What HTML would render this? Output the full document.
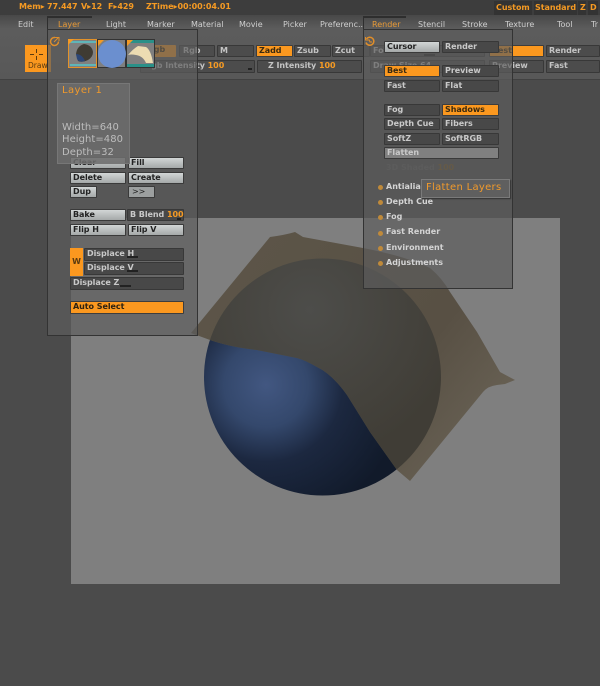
<!DOCTYPE html>
<html><head><meta charset="utf-8">
<style>
html,body{margin:0;padding:0;background:#4b4b4b}
#p{position:relative;width:600px;height:686px;overflow:hidden;background:#4b4b4b;font-family:"DejaVu Sans","Liberation Sans",sans-serif;filter:blur(.35px)}
#p div{position:absolute;box-sizing:border-box;white-space:nowrap}
.t{font-size:8px;color:#cfcfcf;top:20px;line-height:10px;font-weight:normal}
.b{font-size:8px;font-weight:bold;line-height:10px;height:12px;padding-left:2px;letter-spacing:-.05px;border-radius:1px}
.l{background:linear-gradient(#d2d6d6,#a5a9a9);color:#222;border:1px solid #3a3a3a}
.d{background:#484848;color:#c9c9c9;border:1px solid #383838}
.o{background:#fb981f;color:#3a2a10;border:1px solid #3d3d3d}
.tb{background:#4c4c4c;color:#c4c4c4;border:1px solid #383838}
.dot{width:5px;height:5px;border-radius:50%;background:#c08a3a}
.it{font-size:8px;font-weight:bold;color:#d4d4d4;letter-spacing:0;line-height:10px}
.top{font-size:8px;font-weight:bold;color:#f59a23;line-height:10px;letter-spacing:-.05px}
.mk{background:#f59a23;border:1px solid #222;box-sizing:content-box;height:2px}
</style></head><body>
<div id="p">
<!-- top chrome -->
<div style="left:0;top:0;width:600px;height:15px;background:#3d3d3d"></div>
<div style="left:0;top:15px;width:600px;height:27px;background:linear-gradient(#484848,#5c5c5c 50%,#5b5b5b)"></div>
<div style="left:0;top:42px;width:600px;height:38px;background:linear-gradient(#5b5b5b,#585858)"></div>
<div style="left:0;top:79px;width:600px;height:1px;background:#414141"></div>
<div class="top" style="left:19px;top:2px">Mem&#9656;</div>
<div class="top" style="left:47px;top:2px">77.447</div>
<div class="top" style="left:81px;top:2px">V&#9656;12</div>
<div class="top" style="left:108px;top:2px">F&#9656;429</div>
<div class="top" style="left:146px;top:2px">ZTime&#9656;00:00:04.01</div>
<div style="left:494px;top:1px;width:38px;height:14px;background:#333"></div>
<div style="left:534px;top:1px;width:43px;height:14px;background:#333"></div>
<div style="left:578px;top:1px;width:8px;height:14px;background:#333"></div>
<div style="left:588px;top:1px;width:10px;height:14px;background:#333"></div>
<div class="top" style="left:496px;top:3px">Custom</div>
<div class="top" style="left:535px;top:3px">Standard</div>
<div class="top" style="left:580px;top:3px">Z</div>
<div class="top" style="left:590px;top:3px">D</div>
<!-- tabs -->
<div class="t" style="left:18px">Edit</div>
<div class="t" style="left:58px;color:#e89a36">Layer</div>
<div class="t" style="left:106px">Light</div>
<div class="t" style="left:147px">Marker</div>
<div class="t" style="left:191px">Material</div>
<div class="t" style="left:239px">Movie</div>
<div class="t" style="left:283px">Picker</div>
<div class="t" style="left:320px">Preferenc..</div>
<div class="t" style="left:372px;color:#e89a36">Render</div>
<div class="t" style="left:418px">Stencil</div>
<div class="t" style="left:462px">Stroke</div>
<div class="t" style="left:505px">Texture</div>
<div class="t" style="left:557px">Tool</div>
<div class="t" style="left:591px">Tr</div>
<div style="left:47px;top:16px;width:45px;height:2px;background:#2e2e2e"></div>
<div style="left:47px;top:16px;width:1px;height:13px;background:#2e2e2e"></div>
<div style="left:363px;top:16px;width:43px;height:2px;background:#2e2e2e"></div>
<div style="left:363px;top:16px;width:1px;height:13px;background:#2e2e2e"></div>
<!-- toolbar -->
<div style="left:25px;top:45px;width:26px;height:27px;background:#fb981f"></div>
<div style="left:36px;top:49px;width:1px;height:4px;background:#5a3a10"></div>
<div style="left:36px;top:56px;width:1px;height:4px;background:#5a3a10"></div>
<div style="left:30px;top:54px;width:4px;height:1px;background:#5a3a10"></div>
<div style="left:39px;top:54px;width:4px;height:1px;background:#5a3a10"></div>
<div style="left:28px;top:61px;font-size:7.5px;line-height:9px;color:#5a3a10">Draw</div>
<div class="b" style="left:140px;top:45px;width:36px;height:12px;background:#fb981f;color:#3a2a10">Mrgb</div>
<div class="b tb" style="left:179px;top:45px;width:36px;padding-left:3px">Rgb</div>
<div class="b tb" style="left:217px;top:45px;width:37px">M</div>
<div class="b o" style="left:256px;top:45px;width:37px">Zadd</div>
<div class="b tb" style="left:294px;top:45px;width:37px">Zsub</div>
<div class="b tb" style="left:332px;top:45px;width:38px">Zcut</div>
<div class="b tb" style="left:140px;top:60px;width:115px;height:13px;padding-left:4px">Rgb Intensity <span style="color:#f59a23">100</span></div>
<div class="mk" style="left:248px;top:68px;width:4px"></div>
<div class="b tb" style="left:257px;top:60px;width:105px;height:13px;padding-left:10px">Z Intensity <span style="color:#f59a23">100</span></div>
<div class="b tb" style="left:370px;top:45px;width:115px">Focal Shift</div>
<div class="mk" style="left:424px;top:54px;width:11px"></div>
<div class="b tb" style="left:370px;top:60px;width:115px;height:13px">Draw Size 64</div>
<div class="b o" style="left:489px;top:45px;width:55px">Best</div>
<div class="b tb" style="left:546px;top:45px;width:54px">Render</div>
<div class="b tb" style="left:489px;top:60px;width:55px;height:13px">Preview</div>
<div class="b tb" style="left:546px;top:60px;width:54px;height:13px">Fast</div>
<!-- canvas -->
<div style="left:71px;top:218px;width:489px;height:366px;background:#7f7f7f"></div>
<svg style="position:absolute;left:0;top:0" width="600" height="686" viewBox="0 0 600 686">
<defs>
<radialGradient id="s" gradientUnits="userSpaceOnUse" cx="266" cy="385" r="140">
<stop offset="0" stop-color="#425781"/><stop offset=".3" stop-color="#34486c"/><stop offset=".55" stop-color="#1c2840"/><stop offset="1" stop-color="#111a2a"/>
</radialGradient>
<linearGradient id="sh" gradientUnits="userSpaceOnUse" x1="240" y1="240" x2="500" y2="440">
<stop offset="0" stop-color="#5c5548"/><stop offset=".65" stop-color="#585044"/><stop offset="1" stop-color="#6a6356"/>
</linearGradient>
<radialGradient id="ov" gradientUnits="userSpaceOnUse" cx="310" cy="310" r="150">
<stop offset="0" stop-color="#4d4d4a"/><stop offset="1" stop-color="#403d36"/>
</radialGradient>
<clipPath id="c"><circle cx="322.5" cy="377" r="118.5"/></clipPath>
</defs>
<circle cx="322.5" cy="377" r="118.5" fill="url(#s)"/>
<path d="M191 333L270 237Q285 235 295 232L303 237L363 248Q405 256 430 268Q442 278 450 292L477 332L500 372L515 380L505 384L497 385Q488 386 483 392L410 481L397 470L370 432L347 395Q332 374 317 367Q305 360 297 358L257 350Q230 347 210 340Z" fill="url(#sh)"/>
<path d="M191 333L270 237Q285 235 295 232L303 237L363 248Q405 256 430 268Q442 278 450 292L477 332L500 372L515 380L505 384L497 385Q488 386 483 392L410 481L397 470L370 432L347 395Q332 374 317 367Q305 360 297 358L257 350Q230 347 210 340Z" fill="url(#ov)" clip-path="url(#c)"/>
</svg>
<!-- panels -->
<div style="left:47px;top:29px;width:151px;height:307px;background:rgba(93,93,93,.68);border:1px solid #333"></div>
<div style="left:363px;top:29px;width:150px;height:260px;background:rgba(93,93,93,.68);border:1px solid #333"></div>
<!-- layer panel -->
<svg style="position:absolute;left:49px;top:35px" width="12" height="12" viewBox="0 0 12 12"><path d="M9.500 6.500A4 4 0 1 1 6 2.500" fill="none" stroke="#e08e2a" stroke-width="1.500"/><path d="M6 2.500H10V6M5 7L9 3" fill="none" stroke="#e08e2a" stroke-width="1"/></svg>
<svg style="position:absolute;left:68px;top:39px" width="88" height="30" viewBox="0 0 88 30">
<rect x=".5" y=".5" width="28" height="28" fill="#808080" stroke="#e39229"/>
<rect x="2" y="2" width="26" height="2" fill="#5fb5b8"/><rect x="2" y="25" width="26" height="2" fill="#5fb5b8"/>
<path d="M8 15Q9 7 16 5Q24 6 25 13Q25 18 20 21Q14 24 10 22Z" fill="#3f3b33"/>
<path d="M8 15Q14 15 17 22Q11 24 9 20Z" fill="#2c4676"/>
<rect x="29.500" y=".5" width="28" height="28" fill="#7f7f7f" stroke="#333"/>
<circle cx="44" cy="15" r="14" fill="#6b8fcf"/>
<rect x="58.500" y=".5" width="28" height="28" fill="#7f7f7f" stroke="#333"/>
<rect x="59" y="1" width="27" height="3" fill="#2a9088"/><rect x="59" y="25" width="27" height="3" fill="#2a9088"/>
<path d="M60 16Q65 10 70 7L78 8Q83 11 85 24H78Q75 17 68 16Q63 15 60 16Z" fill="#ecdcb2"/>
<path d="M0 0H6L0 6Z" fill="#f59a23"/><path d="M30 1H36L30 7Z" fill="#f59a23"/><path d="M59 1H65L59 7Z" fill="#f59a23"/>
</svg>
<div class="b l" style="left:70px;top:157px;width:56px">Clear</div>
<div class="b l" style="left:128px;top:157px;width:56px">Fill</div>
<div class="b l" style="left:70px;top:172px;width:56px">Delete</div>
<div class="b l" style="left:128px;top:172px;width:56px">Create</div>
<div class="b l" style="left:70px;top:186px;width:27px">Dup</div>
<div class="b l" style="left:128px;top:186px;width:27px;background:#9c9f9f;font-weight:normal;padding-left:3px">&gt;&gt;</div>
<div class="b l" style="left:70px;top:209px;width:56px">Bake</div>
<div class="b d" style="left:127px;top:209px;width:57px;padding-left:2px">B Blend <span style="color:#f59a23">100</span></div>
<div class="mk" style="left:177px;top:218px;width:4px"></div>
<div class="b l" style="left:70px;top:224px;width:56px">Flip H</div>
<div class="b l" style="left:128px;top:224px;width:56px">Flip V</div>
<div style="left:70px;top:248px;width:13px;height:28px;background:#fb981f;color:#5a3a10;font-size:8px;font-weight:bold;line-height:28px;text-align:center">W</div>
<div class="b d" style="left:84px;top:248px;width:100px;height:13px">Displace H</div>
<div class="mk" style="left:127px;top:256px;width:11px"></div>
<div class="b d" style="left:84px;top:262px;width:100px;height:13px">Displace V</div>
<div class="mk" style="left:127px;top:270px;width:11px"></div>
<div class="b d" style="left:70px;top:277px;width:114px;height:13px">Displace Z</div>
<div class="mk" style="left:120px;top:285px;width:11px"></div>
<div class="b o" style="left:70px;top:301px;width:114px;height:13px;color:#2e2210">Auto Select</div>
<!-- tooltip layer -->
<div style="left:57px;top:83px;width:73px;height:81px;background:rgba(108,108,108,.88);border:1px solid #777"></div>
<div style="left:62px;top:85px;font-size:10px;line-height:12px;color:#f09a2c;letter-spacing:.4px">Layer 1</div>
<div style="left:62px;top:122px;font-size:10px;line-height:12.300px;color:#bdbdbd;letter-spacing:.05px">Width=640<br>Height=480<br>Depth=32</div>
<!-- render panel -->
<svg style="position:absolute;left:364px;top:36px" width="11" height="11" viewBox="0 0 11 11"><path d="M2.500 3A4 4 0 1 1 2 6.500" fill="none" stroke="#e08e2a" stroke-width="1.500"/><path d="M1.500 1V4H5M5 3.500L6 6H8" fill="none" stroke="#e08e2a" stroke-width="1"/></svg>
<div class="b l" style="left:384px;top:41px;width:56px">Cursor</div>
<div class="b d" style="left:442px;top:41px;width:57px">Render</div>
<div class="b o" style="left:384px;top:65px;width:56px">Best</div>
<div class="b d" style="left:442px;top:65px;width:57px">Preview</div>
<div class="b d" style="left:384px;top:80px;width:56px">Fast</div>
<div class="b d" style="left:442px;top:80px;width:57px">Flat</div>
<div class="b d" style="left:384px;top:104px;width:56px">Fog</div>
<div class="b o" style="left:442px;top:104px;width:57px">Shadows</div>
<div class="b d" style="left:384px;top:118px;width:56px">Depth Cue</div>
<div class="b d" style="left:442px;top:118px;width:57px">Fibers</div>
<div class="b d" style="left:384px;top:133px;width:56px">SoftZ</div>
<div class="b d" style="left:442px;top:133px;width:57px">SoftRGB</div>
<div class="b" style="left:384px;top:147px;width:115px;background:#808080;color:#c9c9c9;border:1px solid #3a3a3a">Flatten</div>
<div class="it" style="left:386px;top:163px;color:#5c5c5c">3D Shaded <span style="color:#655a48">100</span></div>
<div class="dot" style="left:378px;top:185px"></div><div class="it" style="left:386px;top:182px">Antialias</div>
<div class="dot" style="left:378px;top:200px"></div><div class="it" style="left:386px;top:197px">Depth Cue</div>
<div class="dot" style="left:378px;top:215px"></div><div class="it" style="left:386px;top:212px">Fog</div>
<div class="dot" style="left:378px;top:231px"></div><div class="it" style="left:386px;top:227px">Fast Render</div>
<div class="dot" style="left:378px;top:246px"></div><div class="it" style="left:386px;top:243px">Environment</div>
<div class="dot" style="left:378px;top:261px"></div><div class="it" style="left:386px;top:258px">Adjustments</div>
<div style="left:421px;top:179px;width:89px;height:19px;background:#5f5f5f;border:1px solid #7a7a7a;box-shadow:1px 1px 1px #333;color:#f09a2c;font-size:10px;line-height:16px;padding-left:4px;letter-spacing:.3px">Flatten Layers</div>
</div>
</body></html>
